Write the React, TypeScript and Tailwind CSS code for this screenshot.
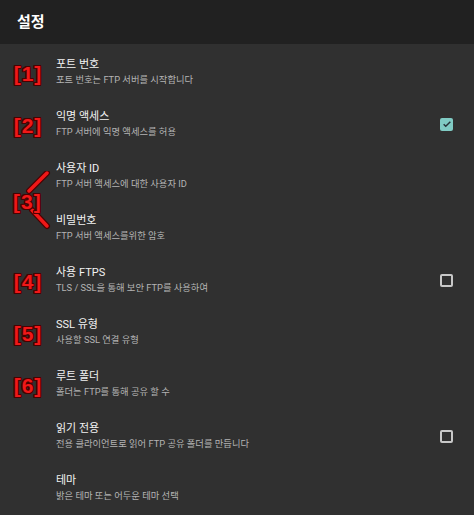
import React from "react";

type Item = { title: string; sub: string; label?: string; check?: "on" | "off" };

const items: Item[] = [
  { title: "포트 번호", sub: "포트 번호는 FTP 서버를 시작합니다", label: "[1]" },
  { title: "익명 액세스", sub: "FTP 서버에 익명 액세스를 허용", label: "[2]", check: "on" },
  { title: "사용자 ID", sub: "FTP 서버 액세스에 대한 사용자 ID" },
  { title: "비밀번호", sub: "FTP 서버 액세스를위한 암호" },
  { title: "사용 FTPS", sub: "TLS / SSL을 통해 보안 FTP를 사용하여", label: "[4]", check: "off" },
  { title: "SSL 유형", sub: "사용할 SSL 연결 유형", label: "[5]" },
  { title: "루트 폴더", sub: "폴더는 FTP를 통해 공유 할 수", label: "[6]" },
  { title: "읽기 전용", sub: "전용 클라이언트로 읽어 FTP 공유 폴더를 만듭니다", check: "off" },
  { title: "테마", sub: "밝은 테마 또는 어두운 테마 선택" },
];

const font = { fontFamily: 'Roboto, "Noto Sans CJK KR", sans-serif' };

function Label({ text }: { text: string }) {
  return (
    <span
      className="text-[21px] font-bold leading-none text-[#f01818] tracking-[1px] [text-shadow:1px_1px_0_#4a0000,-1px_-1px_0_#4a0000,1px_-1px_0_#4a0000,-1px_1px_0_#4a0000,0_1px_0_#4a0000,0_-1px_0_#4a0000,1px_0_0_#4a0000,-1px_0_0_#4a0000]"
      style={{ fontFamily: '"Liberation Sans", Arial, sans-serif' }}
    >
      {text}
    </span>
  );
}

export default function App() {
  return (
    <div className="w-[474px] h-[515px] bg-[#303030] overflow-hidden relative" style={font}>
      <div className="h-[44px] bg-[#212121] flex items-center pl-[17px]">
        <span className="text-white text-[15px] font-bold">설정</span>
      </div>
      <div className="flex flex-col pt-[2px]">
        {items.map((it, i) => (
          <div key={i} className="h-[52px] flex items-center">
            <div className="w-[56px] flex justify-center items-center pt-[3px]">
              {it.label && <Label text={it.label} />}
            </div>
            <div className="flex-1 flex flex-col">
              <span className="text-[11px] leading-[15px] text-[#f2f2f2]">{it.title}</span>
              <span className="text-[9.3px] leading-[15px] text-[#b4b4b4]">{it.sub}</span>
            </div>
            <div className="w-[34px] flex items-center justify-start">
              {it.check === "on" && (
                <div className="w-[13px] h-[13px] rounded-[2px] bg-[#80cbc4] flex items-center justify-center">
                  <svg width="10" height="10" viewBox="0 0 24 24">
                    <path d="M4 12.5l5 5L20 6.5" fill="none" stroke="#263238" strokeWidth="3.5" />
                  </svg>
                </div>
              )}
              {it.check === "off" && (
                <div className="w-[13px] h-[13px] rounded-[2px] border-2 border-[#c8c8c8]" />
              )}
            </div>
          </div>
        ))}
      </div>
      <div className="absolute left-[13px] top-[171px] w-[42px] h-[60px]">
        <svg width="42" height="60" viewBox="0 0 42 60" className="absolute left-0 top-0">
          <line x1="34" y1="2" x2="16" y2="20" stroke="#4a0000" strokeWidth="6" strokeLinecap="round" />
          <line x1="34" y1="2" x2="16" y2="20" stroke="#f01818" strokeWidth="3.5" strokeLinecap="round" />
          <line x1="19" y1="39" x2="34" y2="55" stroke="#4a0000" strokeWidth="6" strokeLinecap="round" />
          <line x1="19" y1="39" x2="34" y2="55" stroke="#f01818" strokeWidth="3.5" strokeLinecap="round" />
        </svg>
        <div className="absolute left-0 top-[20px]">
          <Label text="[3]" />
        </div>
      </div>
    </div>
  );
}
